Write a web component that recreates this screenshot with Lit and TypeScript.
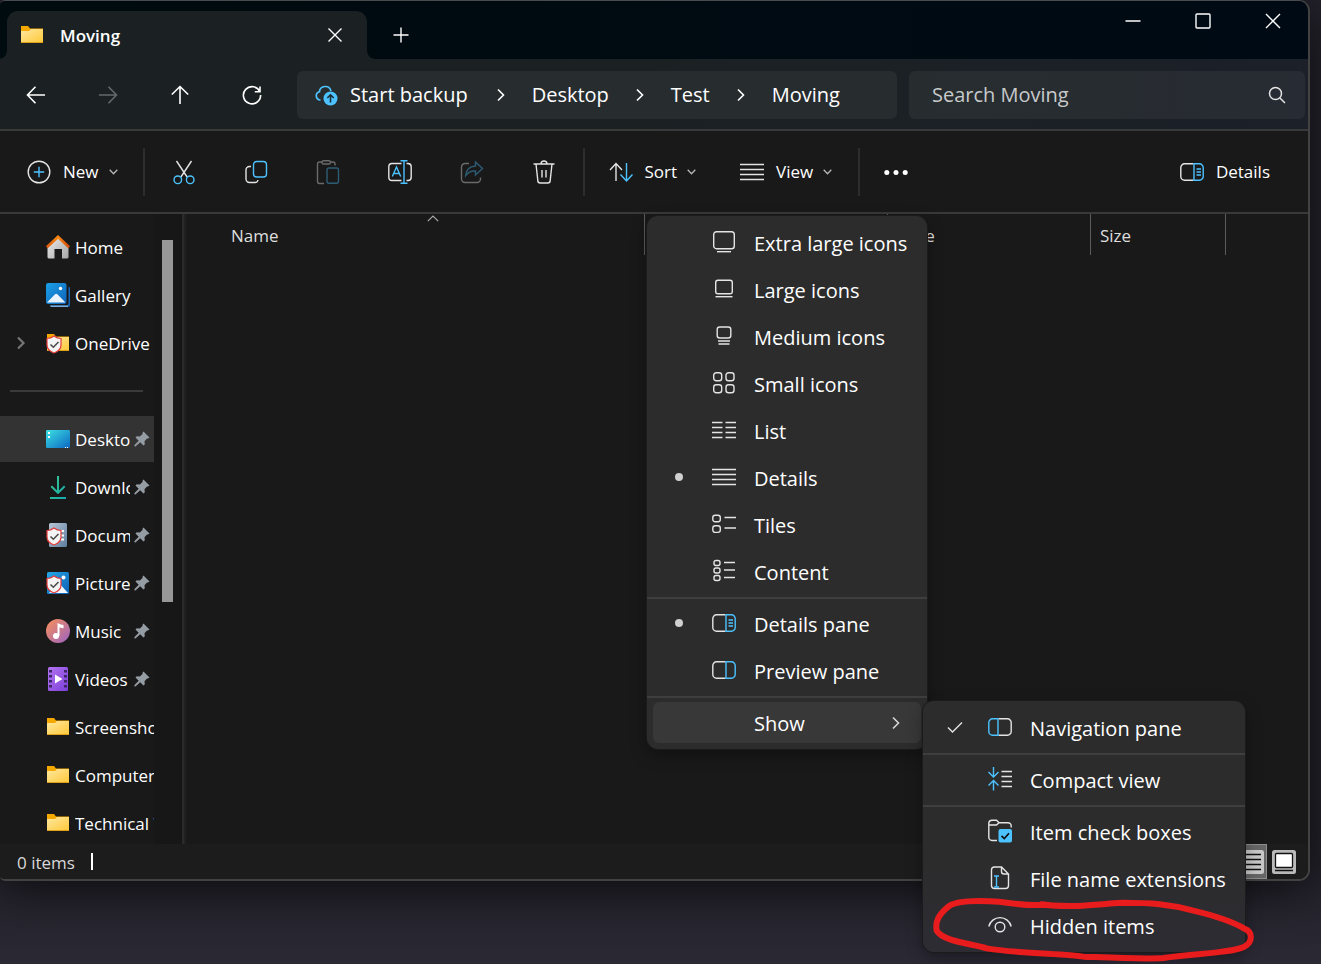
import { LitElement, html, css, svg, nothing } from "lit";
import { customElement } from "lit/decorators.js";
import { classMap } from "lit/directives/class-map.js";

const shield = svg`
  <path d="M1 7.500C4 7.500 6 6.600 8 5c2 1.600 4 2.500 7 2.500v6.500c0 4-3 6.600-7 8-4-1.400-7-4-7-8z" fill="#f4f4f4" stroke="#e23b3b" stroke-width="1.200"/>
  <path d="M4.500 13.500l2.800 2.800 5.200-5.300" fill="none" stroke="#4a4a4a" stroke-width="1.500"/>`;

const folderShape = svg`
  <path d="M1 3h7l2 2.500h13v3H1z" fill="#f5a800"/>
  <path d="M1 8h8l2-2h12v13H1z" fill="url(#fold)"/>
  <path d="M1 19.500h22" stroke="#dfa01a" stroke-width="1"/>`;

const foldGradient = svg`<linearGradient id="fold" x1="0" y1="0" x2="1" y2="1">
  <stop offset="0" stop-color="#ffe8a0"/><stop offset="1" stop-color="#ffc93b"/></linearGradient>`;

const icons: Record<string, unknown> = {
  folder: svg`<defs>${foldGradient}</defs>${folderShape}`,
  close: svg`<path d="M5.500 5.500l13 13M18.500 5.500l-13 13"/>`,
  plus: svg`<path d="M12 4.500v15M4.500 12h15"/>`,
  minimize: svg`<path d="M4.500 12h15"/>`,
  maximize: svg`<rect x="5" y="5" width="14" height="14" rx="1"/>`,
  exit: svg`<path d="M5 5l14 14M19 5L5 19"/>`,
  back: svg`<path d="M21 12H3.500M11.500 3.800L3.500 12l8 8.200"/>`,
  forward: svg`<path d="M3 12h17.500M12.500 3.800l8 8.200-8 8.200"/>`,
  up: svg`<path d="M12 21V3.500M3.800 11.500L12 3.500l8.200 8"/>`,
  refresh: svg`<path d="M19.800 8.600A8.600 8.600 0 1 0 20.600 12M20 3.500v5.200h-5.200"/>`,
  cloud: svg`<path class="b" d="M6.500 17H5.800A4.200 4.200 0 0 1 5.400 8.800 5.900 5.900 0 0 1 17 8" stroke-width="1.700"/>
    <circle class="bf" cx="16.500" cy="15.500" r="7"/><path d="M16.500 19.500v-7.500M13.300 15l3.200-3.200 3.200 3.200" stroke="#1d2d36" stroke-width="1.600"/>`,
  search: svg`<circle cx="10.500" cy="10.500" r="6"/><path d="M15 15l5 5"/>`,
  new: svg`<circle cx="12" cy="12" r="10.800"/><path class="b" d="M12 6.800v10.400M6.800 12h10.400"/>`,
  cut: svg`<path d="M4.500 1l10.600 16M19.500 1L8.900 17"/><circle class="b" cx="5.800" cy="19.800" r="3.800"/><circle class="b" cx="18.200" cy="19.800" r="3.800"/>`,
  copy: svg`<path d="M7 6.500H5.500A3.500 3.500 0 0 0 2 10v9a3.500 3.500 0 0 0 3.500 3.500h5.500a3 3 0 0 0 3-2.500"/><rect class="b" x="9.500" y="1.500" width="13" height="15.500" rx="3.200"/>`,
  paste: svg`<path d="M6 2H3.500A2 2 0 0 0 1.500 4v17.500a2 2 0 0 0 2 2H8M14.500 2H17a2 2 0 0 1 2 2v1.500"/><rect x="6" y=".7" width="8.500" height="3.300" rx="1.600"/><rect class="b" x="11" y="8" width="11.500" height="15.300" rx="2"/>`,
  rename: svg`<path d="M13.500 3.500H4A3.300 3.300 0 0 0 .8 6.800v10.400A3.300 3.300 0 0 0 4 20.500h9.500M18.500 3.500H20a3.300 3.300 0 0 1 3.200 3.300v10.400a3.300 3.300 0 0 1-3.200 3.300h-1.500"/><path class="b" d="M16 1v22M12.500.8h7M12.500 23.200h7M4.300 16.500L8.500 7l4.200 9.500M5.800 13.500h5.400"/>`,
  share: svg`<path d="M9 3.500H5A3.500 3.500 0 0 0 1.500 7v12A3.500 3.500 0 0 0 5 22.500h12a3.500 3.500 0 0 0 3.500-3.500v-1.500"/><path class="b" d="M15.500 2l7 6.500-7 6.500v-4c-4.500-.3-7.500 1.200-9.800 4.500.3-5.500 4-9 9.800-9.500z"/>`,
  trash: svg`<path d="M1.500 4h21M9 4a3 3 0 0 1 6 0M4 4l1.800 16.500a2.500 2.500 0 0 0 2.500 2.500h7.400a2.500 2.500 0 0 0 2.500-2.500L20 4M10 10v7.500M14 10v7.500"/>`,
  sort: svg`<path d="M7 21V3.500M1 10l6-6.500 6 6.500"/><path class="b" d="M17.500 3v18M11.500 14.500l6 6.500 6-6.500"/>`,
  lines: svg`<path d="M0 4.500h24M0 9.500h24M0 14.500h24M0 19.500h24"/>`,
  dots: svg`<g fill="#fff" stroke="none"><circle cx="2.800" cy="12.500" r="2.500"/><circle cx="12" cy="12.500" r="2.500"/><circle cx="21.200" cy="12.500" r="2.500"/></g>`,
  details: svg`<path d="M13.500 3.800H4.500A3.700 3.700 0 0 0 .8 7.500v9a3.700 3.700 0 0 0 3.700 3.700h9"/><path class="b" d="M14 3.800h5.500a3.700 3.700 0 0 1 3.700 3.700v9a3.700 3.700 0 0 1-3.700 3.700H14zM16.500 9h4.500M16.500 12h4.500M16.500 15h4.500"/>`,
  preview: svg`<path d="M13.500 3.800H4.500A3.700 3.700 0 0 0 .8 7.500v9a3.700 3.700 0 0 0 3.700 3.700h9"/><path class="b" d="M14 3.800h5.500a3.700 3.700 0 0 1 3.700 3.700v9a3.700 3.700 0 0 1-3.700 3.700H14z"/>`,
  navpane: svg`<path d="M10.500 3.800h9a3.700 3.700 0 0 1 3.700 3.700v9a3.700 3.700 0 0 1-3.700 3.700h-9"/><path class="b" d="M10 3.800H4.500A3.700 3.700 0 0 0 .8 7.500v9a3.700 3.700 0 0 0 3.700 3.700H10z"/>`,
  xl: svg`<rect x="1.700" y="1.700" width="20.600" height="17" rx="2.800"/><path d="M5 21.700h14"/>`,
  large: svg`<rect x="3.700" y="3.200" width="16.600" height="13.500" rx="2.200"/><path d="M3.500 19.700h17"/>`,
  medium: svg`<rect x="5.200" y="3" width="13.600" height="11" rx="2.500"/><path d="M6 17h12M6.500 20h11"/>`,
  small: svg`<rect x="1.700" y="1.700" width="8" height="8" rx="2.500"/><rect x="14" y="1.700" width="8" height="8" rx="2.500"/><rect x="1.700" y="13.700" width="8" height="8" rx="2.500"/><rect x="14" y="13.700" width="8" height="8" rx="2.500"/>`,
  list: svg`<path d="M0 4.500h10.500M13.500 4.500H24M0 9.500h10.500M13.500 9.500H24M0 14.500h10.500M13.500 14.500H24M0 19.500h10.500M13.500 19.500H24"/>`,
  tiles: svg`<rect x=".8" y="3.200" width="7.500" height="6.600" rx="2.300"/><rect x=".8" y="13.800" width="7.500" height="6.600" rx="2.300"/><path d="M12.500 5.500H24M12.500 16H24"/>`,
  content: svg`<rect x="2" y="1.500" width="6" height="5" rx="2"/><rect x="2" y="9" width="6" height="5" rx="2"/><rect x="2" y="16.500" width="6" height="5" rx="2"/><path d="M12 3.500h11M12 11h11M12 18.500h11"/>`,
  check: svg`<path d="M5 12.500l4.500 4.500 9.500-9.500"/>`,
  compact: svg`<path class="b" d="M5.500 0v9.500M.5 5l5 5 5-5M5.500 23.500V14M.5 18.500l5-5 5 5"/><path d="M13.500 4.500H24M13.500 9.500H24M13.500 14.500H24M13.500 19.500H24" />`,
  boxes: svg`<path d="M9 21.500H4a3.200 3.200 0 0 1-3.200-3.200V4.500A3.200 3.200 0 0 1 4 1.300h4.500L11 3.800h8.500A3.200 3.200 0 0 1 23.200 7v1.500M.8 6h7.700L11 3.800"/>
    <rect class="bf" x="10.500" y="10" width="13.500" height="13.500" rx="2"/><path d="M13.500 16.800l2.800 2.700 4.700-5.200" stroke="#111" stroke-width="1.700"/>`,
  ext: svg`<path d="M13.500 1H6.500a3 3 0 0 0-3 3v15.500a3 3 0 0 0 3 3h11a3 3 0 0 0 3-3V8zM13.500 1v4.500A2.500 2.500 0 0 0 16 8h4.500"/><path class="b" d="M8.500 10v11M6 10h5M6 21h5"/>`,
  eye: svg`<path d="M.8 13.500a11.500 11.500 0 0 1 22.400 0"/><circle cx="12" cy="14" r="4.800"/>`,
  home: svg`<defs><linearGradient id="hm" x1="0" y1="0" x2="1" y2="1"><stop offset="0" stop-color="#eee"/><stop offset="1" stop-color="#a5a5a5"/></linearGradient>
    <linearGradient id="rf"><stop offset="0" stop-color="#d8590b"/><stop offset=".5" stop-color="#f98a14"/><stop offset="1" stop-color="#cf4a0c"/></linearGradient></defs>
    <path d="M1.500 11L12 1.500 22.500 11v11a1.500 1.500 0 0 1-1.500 1.500h-5V14H8.500v9.500H3A1.500 1.500 0 0 1 1.500 22z" fill="url(#hm)"/>
    <path d="M.8 12.200L12 2l11.200 10.200" fill="none" stroke="url(#rf)" stroke-width="2.800"/>`,
  gallery: svg`<defs><linearGradient id="gl" x1="0" y1="0" x2="1" y2="1"><stop offset="0" stop-color="#1ba0e8"/><stop offset="1" stop-color="#0f63b8"/></linearGradient></defs>
    <path d="M22.500 3.500q1.500.5 1.500 2V22q0 2-2 2H6q-1.500 0-2-1.500h16.500q2 0 2-2z" fill="#1268bd"/><path d="M4 22.500h18v1.500H5z" fill="#79aee0"/>
    <rect width="20.500" height="21" rx="2.200" fill="url(#gl)"/><path d="M1 19.500l8-8.300q1.200-1 2.400 0l8 8.300z" fill="#eaf5ff"/><circle cx="14.500" cy="5.500" r="1.700" fill="#fff"/>`,
  onedrive: svg`<defs>${foldGradient}</defs>${folderShape}${shield}`,
  desktop: svg`<defs><linearGradient id="dk" x1="0" y1="0" x2="1" y2="1"><stop offset="0" stop-color="#3be0e2"/><stop offset="1" stop-color="#0d68c4"/></linearGradient></defs>
    <rect y="3" width="24" height="18" rx="1.200" fill="url(#dk)"/><path d="M2 5h2v2H2zM2 9h2v2H2zM19 20h1v1h-1zM21 20h1v1h-1z" fill="#fff"/>`,
  downloads: svg`<defs><linearGradient id="dl" x1="0" y1="0" x2="1" y2="1"><stop offset="0" stop-color="#38c98a"/><stop offset="1" stop-color="#16a9b2"/></linearGradient></defs>
    <path d="M4 22h16v2H4zM11 1h2v14.500l5-5 1.400 1.400L12 19.300l-7.400-7.400L6 10.500l5 5z" fill="url(#dl)"/>`,
  documents: svg`<defs><linearGradient id="dc" x1="0" y1="0" x2="1" y2="1"><stop offset="0" stop-color="#b8c6d6"/><stop offset="1" stop-color="#5d7d9f"/></linearGradient></defs>
    <rect x="3" width="18" height="24" rx="1.500" fill="url(#dc)"/><path d="M12 8h6M12 12.500h6M12 16.500h6" stroke="#fff" stroke-width="1.800"/>${shield}`,
  pictures: svg`<defs><linearGradient id="pc" x1="0" y1="0" x2="1" y2="1"><stop offset="0" stop-color="#25a7e8"/><stop offset="1" stop-color="#0c5fb4"/></linearGradient></defs>
    <rect x="1" y="1" width="22" height="22" rx="1.500" fill="url(#pc)"/><path d="M3 22l10-10 9 10z" fill="#f1f8ff"/><circle cx="17.500" cy="6.500" r="2" fill="#fff"/>${shield}`,
  music: svg`<defs><linearGradient id="mu" x1="0" y1="0" x2="1" y2="1"><stop offset="0" stop-color="#fb9156"/><stop offset="1" stop-color="#9a62c4"/></linearGradient></defs>
    <circle cx="12" cy="12" r="12" fill="url(#mu)"/><circle cx="10" cy="17" r="3" fill="#fff"/><path d="M11.500 17V4q3.500 2 6 2v3.200q-2 0-4-1V17z" fill="#fff"/>`,
  videos: svg`<defs><linearGradient id="vd" x1="0" y1="0" x2="1" y2="1"><stop offset="0" stop-color="#b274f0"/><stop offset="1" stop-color="#7d3fd8"/></linearGradient></defs>
    <rect x="2" width="20" height="24" rx="1.500" fill="url(#vd)"/><path d="M3 3h3v2.500H3zM3 8h3v2.500H3zM3 13h3v2.500H3zM3 18h3v2.500H3zM18 3h3v2.500h-3zM18 8h3v2.500h-3zM18 13h3v2.500h-3zM18 18h3v2.500h-3z" fill="#3c2766"/><path d="M9 7.500l7.500 4.500L9 16.500z" fill="#fff"/>`,
};

const icon = (name: string, cls = "") =>
  html`<svg class="icon ${cls}" viewBox="0 0 24 24" aria-hidden="true">${icons[name]}</svg>`;
const chevronRight = () =>
  html`<svg class="chev" viewBox="0 0 8 14" aria-hidden="true"><path d="M1 1.500L6.500 7 1 12.500" /></svg>`;
const chevronDown = html`<svg class="down" viewBox="0 0 9 6" aria-hidden="true"><path d="M.7.8l3.800 3.900L8.300.8" /></svg>`;

interface MenuEntry { label: string; icon?: string; mark?: "dot" | "check"; submenu?: boolean; }

const viewMenu: (MenuEntry | null)[] = [
  { label: "Extra large icons", icon: "xl" },
  { label: "Large icons", icon: "large" },
  { label: "Medium icons", icon: "medium" },
  { label: "Small icons", icon: "small" },
  { label: "List", icon: "list" },
  { label: "Details", icon: "lines", mark: "dot" },
  { label: "Tiles", icon: "tiles" },
  { label: "Content", icon: "content" },
  null,
  { label: "Details pane", icon: "details", mark: "dot" },
  { label: "Preview pane", icon: "preview" },
  null,
  { label: "Show", submenu: true },
];

const showMenu: (MenuEntry | null)[] = [
  { label: "Navigation pane", icon: "navpane", mark: "check" },
  null,
  { label: "Compact view", icon: "compact" },
  null,
  { label: "Item check boxes", icon: "boxes" },
  { label: "File name extensions", icon: "ext" },
  { label: "Hidden items", icon: "eye" },
];

const iconStyles = css`
  .icon { width: 24px; height: 24px; flex: none; display: block; fill: none; stroke: #e4e4e4; stroke-width: 1.4; overflow: visible; }
  .icon .b { stroke: #4cc2ff; }
  .icon .bf { fill: #4cc2ff; stroke: none; }
  .icon.art { stroke: none; }
  .chev, .down { display: block; flex: none; fill: none; stroke: #fff; stroke-width: 1.6; }
  .chev { width: 8px; height: 14px; }
  .down { width: 9px; height: 6px; stroke: #b5b5b5; stroke-width: 1.3; }
  button { font: inherit; color: inherit; background: none; border: 0; padding: 0; margin: 0; text-align: left; }
`;

@customElement("context-menu")
class ContextMenu extends LitElement {
  static properties = { entries: { attribute: false } };
  declare entries: (MenuEntry | null)[];
  constructor() {
    super();
    this.entries = [];
  }
  static styles = [iconStyles, css`
    :host {
      display: block; box-sizing: border-box; padding: 4px 0 2px; border-radius: 11px;
      background: var(--menu-bg, #2c2c2c); color: #fff; font-size: 20px; line-height: 26px;
      box-shadow: 0 0 0 1px #1b1b1b, 0 6px 16px rgba(0, 0, 0, 0.35);
    }
    .menu { display: flex; flex-direction: column; }
    .item {
      display: grid; grid-template-columns: 24px 24px 1fr auto; align-items: center; box-sizing: border-box;
      column-gap: 18px; height: 47px; padding: 0 22px 3px 23px; white-space: nowrap;
    }
    .mark { width: 24px; height: 24px; margin-left: -3px; display: grid; place-items: center; }
    .dot { width: 8px; height: 8px; border-radius: 50%; background: #d0d0d0; }
    .label { padding-top: 4px; }
    .open { height: 41px; margin: 2px 6px 4px; padding: 0 21px 0 17px; border-radius: 6px; background: #383838; }
    .open .label { padding-top: 2px; }
    .chev { stroke: #d6d6d6; }
    hr { border: 0; height: 2px; margin: 1px 0 2px; background: #3e3e3e; }
  `];
  render() {
    return html`<div class="menu" role="menu">${this.entries.map((e) => e === null ? html`<hr />` : html`
      <button class=${classMap({ item: true, open: !!e.submenu })} role="menuitem">
        <span class="mark">${e.mark === "dot" ? html`<span class="dot"></span>` : e.mark === "check" ? icon("check") : nothing}</span>
        ${e.icon ? icon(e.icon) : html`<span></span>`}
        <span class="label">${e.label}</span>
        ${e.submenu ? chevronRight() : nothing}
      </button>`)}</div>`;
  }
}

interface Place { label: string; icon: string; pinned?: boolean; expandable?: boolean; selected?: boolean; }

const places: (Place | null)[] = [
  { label: "Home", icon: "home" },
  { label: "Gallery", icon: "gallery" },
  { label: "OneDrive", icon: "onedrive", expandable: true },
  null,
  { label: "Desktop", icon: "desktop", pinned: true, selected: true },
  { label: "Downloads", icon: "downloads", pinned: true },
  { label: "Documents", icon: "documents", pinned: true },
  { label: "Pictures", icon: "pictures", pinned: true },
  { label: "Music", icon: "music", pinned: true },
  { label: "Videos", icon: "videos", pinned: true },
  { label: "Screenshots", icon: "folder" },
  { label: "Computer", icon: "folder" },
  { label: "Technical Writing", icon: "folder" },
];

@customElement("nav-tree")
class NavTree extends LitElement {
  static styles = [iconStyles, css`
    :host { display: flex; flex: none; min-height: 0; overflow: hidden; color: #fff; font-size: 17px; line-height: 24px; }
    nav { width: 154px; padding-top: 10px; overflow: hidden; }
    .place {
      display: flex; align-items: center; height: 48px; box-sizing: border-box; padding: 0 4px 2px 14px;
      color: inherit; text-decoration: none; white-space: nowrap;
    }
    .place.loose { padding-right: 0; }
    .place.selected { background: linear-gradient(#333 46px, transparent 46px); }
    .expander { width: 32px; flex: none; }
    .expander .chev { width: 14px; height: 14px; stroke: #757575; stroke-width: 2.2; }
    .name { flex: 1; min-width: 0; overflow: hidden; margin-left: 5px; padding-top: 2px; }
    .pin { width: 16px; height: 16px; margin-left: 4px; flex: none; fill: #949ca4; }
    .rule { height: 48px; display: flex; align-items: center; padding: 0 11px 2px 10px; box-sizing: border-box; }
    hr { flex: 1; border: 0; height: 2px; margin: 0; background: #3a3a3a; }
    .track { width: 27px; background: #171717; padding: 26px 8px 0; box-sizing: border-box; }
    .thumb { width: 11px; height: 60%; background: #979797; }
    .split { width: 5px; box-sizing: border-box; background: #2b2b2b; border-left: 1px solid #141414; border-right: 2px solid #212121; }
  `];
  render() {
    return html`
      <nav>${places.map((p) => p === null ? html`<div class="rule"><hr /></div>` : html`
        <a href="#" class=${classMap({ place: true, selected: !!p.selected, loose: !p.pinned })}>
          <span class="expander">${p.expandable ? chevronRight() : nothing}</span>
          ${icon(p.icon, "art")}
          <span class="name">${p.label}</span>
          ${p.pinned ? html`<svg class="pin" viewBox="0 0 16 16" aria-hidden="true"><path d="M9.500.5l6 6-1.500 1-1 0-2.500 2.700.3 3-1.300 1.300-3.300-3.300L1.500 15.500l-1.200-.2.200-1.200L4.700 9.800 1.500 6.500l1.300-1.300 3 .3L8.500 3V1.800z"/></svg>` : nothing}
        </a>`)}
      </nav>
      <div class="track"><div class="thumb"></div></div>
      <div class="split"></div>`;
  }
}

@customElement("app-root")
class AppRoot extends LitElement {
  static styles = [iconStyles, css`
    :host {
      display: flex; flex-direction: column; position: relative; box-sizing: border-box;
      height: 100vh; overflow: hidden; padding: 0 11px 83px 0;
      font-family: "Open Sans", "Noto Sans", sans-serif; color: #fff;
      background: linear-gradient(#23222b 0, #23222b 90%, #2b2934);
    }
    .window {
      flex: 1; min-height: 0; display: flex; flex-direction: column; overflow: hidden; background: #191919;
      border: 2px solid #424242; border-top: 1px solid #4a4b4e; border-left: 0; border-radius: 5px 11px 11px 5px;
      box-shadow: 0 8px 50px rgba(0, 0, 0, 0.65);
    }
    .titlebar { display: flex; align-items: flex-start; height: 58px; background: linear-gradient(90deg, #000b0f, #000a14); }
    .tab {
      position: relative; display: flex; align-items: center; width: 360px; height: 48px; margin: 10px 0 0 7px;
      box-sizing: border-box; padding: 0 20px 0 13px; border-radius: 11px 11px 0 0; background: #1b2123;
      font-size: 17px; line-height: 24px; font-weight: 600;
    }
    .tab::before, .tab::after { content: ""; position: absolute; bottom: 0; width: 7px; height: 7px; }
    .tab::before { left: -7px; background: radial-gradient(circle at 0 0, transparent 6px, #1b2123 7px); }
    .tab::after { right: -7px; background: radial-gradient(circle at 100% 0, transparent 6px, #1b2123 7px); }
    .tab .name { flex: 1; margin-left: 16px; padding-top: 2px; }
    .plus { margin: 22px 0 0 22px; }
    .plus .icon, .tab button .icon { stroke: #fff; }
    .controls { display: flex; margin-left: auto; }
    .controls button { width: 70px; height: 40px; display: grid; place-items: center; }
    .controls .icon { stroke: #fff; }
    .navbar {
      display: flex; align-items: center; height: 70px; box-sizing: content-box; padding-right: 3px;
      background: linear-gradient(90deg, #1b2123 50%, #1b2029); border-bottom: 2px solid #393939;
    }
    .nav { width: 72px; height: 50px; display: grid; place-items: center; padding-top: 2px; box-sizing: border-box; }
    .nav .icon { stroke: #fff; stroke-width: 1.6; }
    .nav:disabled .icon { stroke: #64686a; }
    .fields { flex: 1; min-width: 0; display: grid; grid-template-columns: minmax(0, 600fr) minmax(0, 396fr); gap: 12px; margin-left: 9px; padding-top: 2px; }
    .address, .search { display: flex; align-items: center; height: 48px; box-sizing: border-box; border-radius: 6px; font-size: 20px; line-height: 28px; }
    .address { padding-left: 17px; gap: 27px; background: #272d2f; white-space: nowrap; }
    .backup { display: flex; align-items: center; gap: 12px; padding-right: 2px; }
    .search { padding: 0 16px 0 23px; background: linear-gradient(90deg, #272d2f, #272b33); }
    .search input { flex: 1; min-width: 0; border: 0; outline: 0; padding: 0; background: none; color: #fff; font: inherit; }
    .search input::placeholder { color: #c8cacb; opacity: 1; }
    .search .icon { stroke-width: 1.5; }
    .toolbar { display: flex; align-items: center; height: 81px; border-bottom: 2px solid #393939; font-size: 17px; line-height: 24px; }
    .toolbar button { display: flex; align-items: center; height: 48px; }
    .toolbar .tool { width: 72px; justify-content: center; }
    .toolbar .tool:disabled { opacity: 0.4; }
    .toolbar .drop { gap: 12px; padding: 0 26px 0 24px; }
    .toolbar .drop.new { padding-left: 27px; padding-right: 25px; }
    .toolbar .drop.view { padding-left: 18px; }
    .caption { display: flex; align-items: center; gap: 10px; }
    .sep { width: 2px; height: 48px; background: #2d2d2d; }
    .tools { display: flex; padding: 0 3px; }
    .more { padding: 0 24px; }
    .toolbar .pane { margin-left: auto; gap: 12px; padding-right: 38px; }
    .body { flex: 1; min-height: 0; display: flex; }
    .files { flex: 1; min-width: 0; overflow: hidden; padding-left: 36px; }
    table { border-collapse: separate; border-spacing: 0; table-layout: fixed; width: 100%; }
    th {
      position: relative; height: 41px; box-sizing: border-box; padding: 3px 9px 0; border-right: 1px solid #5c5c5c;
      font-weight: 400; font-size: 17px; line-height: 24px; text-align: left; color: #dedede;
    }
    th:last-child { border-right: 0; }
    .c1 { width: 423px; } .c2 { width: 243px; } .c3 { width: 203px; } .c4 { width: 135px; }
    .asc { position: absolute; top: 1px; left: calc(50% - 6px); width: 12px; height: 7px; fill: none; stroke: #a8a8a8; stroke-width: 1.2; }
    .status { display: flex; align-items: center; height: 35px; padding-left: 17px; background: #1c1c1c; color: #d8d8d8; font-size: 17px; line-height: 24px; }
    .count { padding-top: 2px; }
    .caret { width: 2px; height: 17px; margin-left: 16px; background: #fff; }
    .modes { display: flex; align-items: center; margin-left: auto; padding-right: 12px; gap: 5px; }
    .modes button { display: grid; place-items: center; height: 35px; }
    .modes button.on { width: 31px; box-sizing: border-box; background: #666; border: 1px solid #8d8d8d; }
    .modes .icon { stroke: #111; stroke-width: 1.3; }
    .viewmenu { position: absolute; left: 647px; top: 216px; width: 280px; }
    .showmenu { position: absolute; left: 923px; top: 701px; width: 322px; --menu-bg: linear-gradient(#2c2c2c 60%, #2d2c33); }
    .ink { position: absolute; left: 910px; top: 690px; width: 411px; height: 274px; fill: none; stroke: #e81c1c; stroke-width: 18; stroke-linejoin: round; pointer-events: none; }
  `];

  render() {
    return html`
      <main class="window">
        <header class="titlebar">
          <div class="tab">
            ${icon("folder", "art")}
            <span class="name">Moving</span>
            <button aria-label="Close tab">${icon("close")}</button>
          </div>
          <button class="plus" aria-label="New tab">${icon("plus")}</button>
          <div class="controls">
            <button aria-label="Minimize">${icon("minimize")}</button>
            <button aria-label="Maximize">${icon("maximize")}</button>
            <button aria-label="Close">${icon("exit")}</button>
          </div>
        </header>

        <div class="navbar">
          <button class="nav" aria-label="Back">${icon("back")}</button>
          <button class="nav" aria-label="Forward" disabled>${icon("forward")}</button>
          <button class="nav" aria-label="Up">${icon("up")}</button>
          <button class="nav" aria-label="Refresh">${icon("refresh")}</button>
          <div class="fields">
            <div class="address">
              <button class="backup">${icon("cloud")}<span>Start backup</span></button>
              ${chevronRight()}<button>Desktop</button>
              ${chevronRight()}<button>Test</button>
              ${chevronRight()}<button>Moving</button>
            </div>
            <label class="search">
              <input type="text" placeholder="Search Moving" aria-label="Search Moving" />
              ${icon("search")}
            </label>
          </div>
        </div>

        <div class="toolbar">
          <button class="drop new">${icon("new")}<span class="caption">New ${chevronDown}</span></button>
          <span class="sep"></span>
          <div class="tools">
            <button class="tool" aria-label="Cut">${icon("cut")}</button>
            <button class="tool" aria-label="Copy">${icon("copy")}</button>
            <button class="tool" aria-label="Paste" disabled>${icon("paste")}</button>
            <button class="tool" aria-label="Rename">${icon("rename")}</button>
            <button class="tool" aria-label="Share" disabled>${icon("share")}</button>
            <button class="tool" aria-label="Delete">${icon("trash")}</button>
          </div>
          <span class="sep"></span>
          <button class="drop">${icon("sort")}<span class="caption">Sort ${chevronDown}</span></button>
          <button class="drop view">${icon("lines")}<span class="caption">View ${chevronDown}</span></button>
          <span class="sep"></span>
          <button class="more" aria-label="See more">${icon("dots")}</button>
          <button class="pane">${icon("details")}<span>Details</span></button>
        </div>

        <div class="body">
          <nav-tree></nav-tree>
          <section class="files">
            <table>
              <colgroup><col class="c1" /><col class="c2" /><col class="c3" /><col class="c4" /><col /></colgroup>
              <thead>
                <tr>
                  <th>Name<svg class="asc" viewBox="0 0 12 7" aria-hidden="true"><path d="M.8 6.200L6 1l5.200 5.200" /></svg></th>
                  <th></th>
                  <th>Type</th>
                  <th>Size</th>
                  <th></th>
                </tr>
              </thead>
            </table>
          </section>
        </div>

        <footer class="status">
          <span class="count">0 items</span><span class="caret"></span>
          <div class="modes">
            <button class="on" aria-label="Details view">
              <svg class="icon" viewBox="0 0 24 24" aria-hidden="true"><rect width="24" height="24" rx="2.500" fill="#c8c8c8" stroke="none" /><path d="M3 4.500h18M3 9.500h18M3 14.500h18M3 19.500h18" /></svg>
            </button>
            <button aria-label="Large thumbnails">
              <svg class="icon" viewBox="0 0 24 24" aria-hidden="true"><rect width="24" height="24" rx="2.500" fill="#b9b9b9" stroke="none" /><rect x="3.500" y="3.500" width="17" height="14" rx="1" fill="#fff" /><path d="M3 20.500h18" /></svg>
            </button>
          </div>
        </footer>
      </main>

      <context-menu class="viewmenu" .entries=${viewMenu}></context-menu>
      <context-menu class="showmenu" .entries=${showMenu}></context-menu>
      <svg class="ink" viewBox="0 0 1233 822" aria-hidden="true">
        <path d="M405 644C340 650 300 636 240 634C180 631 135 634 115 650C85 675 75 695 80 722C100 755 180 760 230 775C330 792 470 790 520 800C600 803 700 808 760 804C860 790 960 790 1003 770C1030 755 1028 725 1003 716C960 690 900 674 850 662C780 642 720 638 640 638C560 642 520 650 480 648C440 648 420 648 390 642" />
      </svg>`;
  }
}
